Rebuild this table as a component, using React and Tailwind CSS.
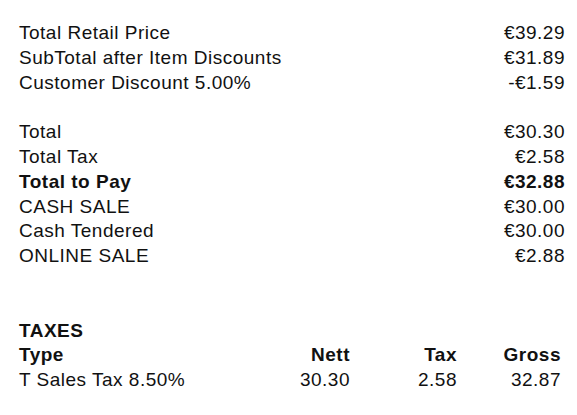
const rows1 = [
  ["Total Retail Price", "€39.29"],
  ["SubTotal after Item Discounts", "€31.89"],
  ["Customer Discount 5.00%", "-€1.59"],
];

const rows2 = [
  ["Total", "€30.30"],
  ["Total Tax", "€2.58"],
  ["Total to Pay", "€32.88", true],
  ["CASH SALE", "€30.00"],
  ["Cash Tendered", "€30.00"],
  ["ONLINE SALE", "€2.88"],
];

function Row({ label, value, bold }) {
  return (
    <div className={`flex justify-between ${bold ? "font-bold" : ""}`}>
      <span>{label}</span>
      <span>{value}</span>
    </div>
  );
}

export default function App() {
  return (
    <div
      className="w-[577px] h-[415px] bg-white text-[#111] text-[19px] tracking-[0.5px] leading-[24.8px] pl-[19px] pr-[12px] pt-[21px]"
      style={{ fontFamily: '"Liberation Sans", Arial, sans-serif' }}
    >
      {rows1.map(([l, v]) => (
        <Row key={l} label={l} value={v} />
      ))}

      <div className="h-[24.8px]" />

      {rows2.map(([l, v, b]) => (
        <Row key={l} label={l} value={v} bold={b} />
      ))}

      <div className="h-[49.6px]" />

      <div className="font-bold">TAXES</div>
      <div className="grid grid-cols-[1fr_70px_107px_104px] pr-[4px]">
        <span className="font-bold">Type</span>
        <span className="font-bold text-right">Nett</span>
        <span className="font-bold text-right">Tax</span>
        <span className="font-bold text-right">Gross</span>
        <span>T Sales Tax 8.50%</span>
        <span className="text-right">30.30</span>
        <span className="text-right">2.58</span>
        <span className="text-right">32.87</span>
      </div>
    </div>
  );
}
